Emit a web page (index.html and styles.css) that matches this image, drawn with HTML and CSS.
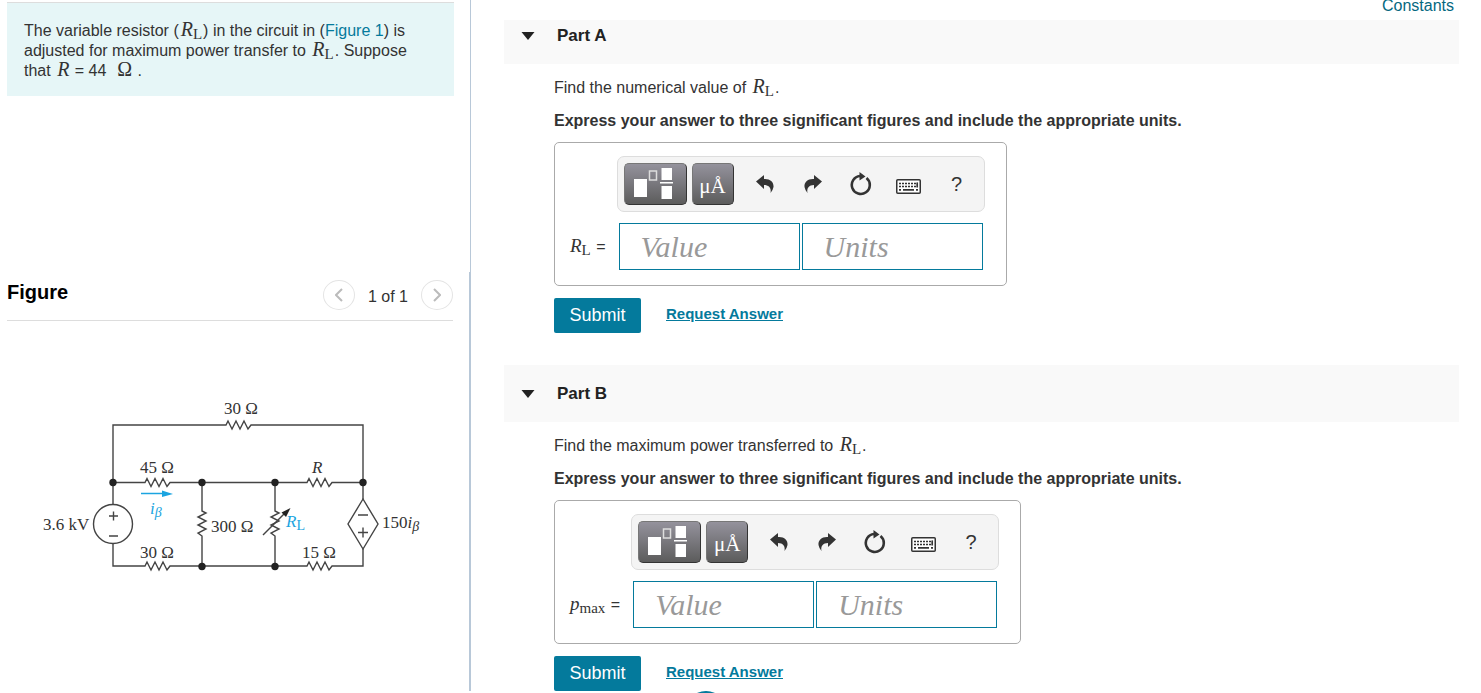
FILE: index.html
```html
<!DOCTYPE html>
<html lang="en">

<head>
  <meta charset="UTF-8">
  <meta name="viewport" content="width=device-width, initial-scale=1.0">
  <title>Maximum power transfer</title>
  <link rel="stylesheet" href="styles.css">
</head>

<body>
  <!-- shared icons -->
  <svg class="sprite" aria-hidden="true">
    <symbol id="template" viewBox="1 1 61 40">
      <rect x="10" y="16" width="13" height="18" fill="#fff" />
      <rect x="25.500" y="8" width="7" height="9" fill="none" stroke="#ddd" stroke-width="1.500" />
      <rect x="37.500" y="5" width="10.500" height="12" fill="#fff" />
      <rect x="36" y="19" width="13" height="1.500" fill="#fff" />
      <rect x="37.500" y="23" width="10.500" height="13" fill="#fff" />
    </symbol>
    <symbol id="undo" viewBox="0 0 18 20">
      <path d="M0 7.500 L8 1 V5 C14 4.500 18 8 17.500 13 Q17 16 14.500 19 C15.500 14 13 11 8 11 V15 Z" />
    </symbol>
    <symbol id="redo" viewBox="0 0 18 20">
      <path d="M18 7.500 L10 1 V5 C4 4.500 0 8 0.500 13 Q1 16 3.500 19 C2.500 14 5 11 10 11 V15 Z" />
    </symbol>
    <symbol id="reset" viewBox="0 0 22 24">
      <path d="M16.500 6 A9 9 0 1 1 10 4" fill="none" stroke="#333" stroke-width="2.600" />
      <path d="M9.500 0 L15.500 4.500 L9.500 8.500 Z" />
    </symbol>
    <symbol id="keyboard" viewBox="0 0 25 15">
      <rect x="0.750" y="0.750" width="23.500" height="13.500" rx="1" fill="#fff" stroke="#333" stroke-width="1.500" />
      <path d="M3 4.500 H22 M3 7.500 H20" stroke="#333" stroke-width="1.700" stroke-dasharray="2 1" />
      <path d="M3 10.800 H5 M7 10.800 H18 M20 10.800 H22 M21.200 3.500 V8.500" stroke="#333" stroke-width="1.700" />
    </symbol>
  </svg>

  <main class="page">
    <aside class="left">
      <div class="problem">
        The variable resistor (<span class="math"><i>R</i><sub>L</sub></span>) in the circuit in (<a href="#figure">Figure 1</a>) is
        adjusted for maximum power transfer to <span class="math"><i>R</i><sub>L</sub></span>. Suppose
        that <span class="math"><i>R</i></span> = 44 &nbsp;<span class="math">Ω</span> .
      </div>

      <section class="figure" id="figure">
        <header class="figure-head">
          <h2>Figure</h2>
          <div class="pager">
            <button type="button" aria-label="Previous figure"><svg viewBox="0 0 8 14"><path d="M7 1 L1 7 L7 13" /></svg></button>
            <span>1 of 1</span>
            <button type="button" aria-label="Next figure"><svg viewBox="0 0 8 14"><path d="M1 1 L7 7 L1 13" /></svg></button>
          </div>
        </header>

        <svg class="circuit" width="400" height="190" viewBox="30 390 400 190" role="img" aria-label="Circuit diagram">
          <!-- wires and resistors -->
          <g class="wire">
            <path d="M113 504 V425 H226 l2 -4 4 8 4 -8 4 8 4 -8 4 8 3 -4 H363 V499" />
            <path d="M113 482.500 H145 l2 -4 4 8 4 -8 4 8 4 -8 4 8 3 -4 H307 l2 -4 4 8 4 -8 4 8 4 -8 4 8 3 -4 H363" />
            <path d="M113 544 V566 H145 l2 -4 4 8 4 -8 4 8 4 -8 4 8 3 -4 H307 l2 -4 4 8 4 -8 4 8 4 -8 4 8 3 -4 H363 V549" />
            <path d="M202 482 V511 l4 2 -8 4 8 4 -8 4 8 4 -8 4 4 3 V566" />
            <path d="M275 482 V511 l4 2 -8 4 8 4 -8 4 8 4 -8 4 4 3 V566" />
            <circle cx="113" cy="524" r="19.500" />
            <path d="M363 499 L378 524 L363 549 L348 524 Z" />
            <path d="M109 516 H118 M113.500 511.500 V520.500 M109 536 H118" />
            <path d="M358 515 H368 M358 532.500 H368 M363 527.500 V537.500" />
            <path d="M263 535 L286 512" />
          </g>
          <path class="ink" d="M290.500 508 L286 517 L281.500 512.500 Z" />
          <g class="ink">
            <circle cx="113" cy="482.500" r="3.700" />
            <circle cx="202" cy="482.500" r="3.700" />
            <circle cx="275" cy="482.500" r="3.700" />
            <circle cx="363" cy="482.500" r="3.700" />
            <circle cx="202" cy="566.500" r="3.700" />
            <circle cx="275" cy="566.500" r="3.700" />
          </g>
          <path class="current" d="M141 493.500 H164" />
          <path class="blue" d="M162 490.500 L173 494 L162 497 Z" />
          <!-- labels -->
          <g class="labels">
            <text x="224" y="414">30 Ω</text>
            <text x="140" y="473">45 Ω</text>
            <text x="140" y="558">30 Ω</text>
            <text x="43" y="530">3.6 kV</text>
            <text x="211" y="532">300 Ω</text>
            <text x="302" y="558">15 Ω</text>
            <text x="312" y="473" font-style="italic">R</text>
            <text x="382" y="528">150<tspan font-style="italic">i</tspan><tspan class="small" font-style="italic" dy="3">β</tspan></text>
            <text class="blue" x="150" y="514" font-style="italic">i<tspan class="small" dy="3">β</tspan></text>
            <text class="blue" x="286" y="527"><tspan font-style="italic">R</tspan><tspan class="small" dy="3">L</tspan></text>
          </g>
        </svg>
      </section>
    </aside>

    <div class="right">
      <nav class="topbar"><a href="#constants">Constants</a></nav>

      <section class="part">
        <header class="part-head">
          <svg class="caret" viewBox="0 0 14 8"><path d="M0.500 0 H13.500 L7 8 Z" /></svg>
          <h3>Part A</h3>
        </header>
        <form class="part-body">
          <p>Find the numerical value of <span class="math"><i>R</i><sub>L</sub></span>.</p>
          <p class="bold">Express your answer to three significant figures and include the appropriate units.</p>
          <div class="answer">
            <div class="toolbar">
              <button type="button" class="dark wide" aria-label="Templates"><svg><use href="#template" /></svg></button>
              <button type="button" class="dark">μÅ</button>
              <button type="button" class="tool" aria-label="Undo"><svg width="18" height="20"><use href="#undo" /></svg></button>
              <button type="button" class="tool" aria-label="Redo"><svg width="18" height="20"><use href="#redo" /></svg></button>
              <button type="button" class="tool" aria-label="Reset"><svg width="22" height="24"><use href="#reset" /></svg></button>
              <button type="button" class="tool keys" aria-label="Keyboard shortcuts"><svg width="25" height="15"><use href="#keyboard" /></svg></button>
              <button type="button" class="tool">?</button>
            </div>
            <label for="valueA"><span class="math"><i>R</i><sub>L</sub></span> =</label>
            <div class="fields">
              <input type="text" id="valueA" placeholder="Value">
              <input type="text" aria-label="Units" placeholder="Units">
            </div>
          </div>
          <div class="actions">
            <button type="button" class="submit">Submit</button>
            <a href="#answerA">Request Answer</a>
          </div>
        </form>
      </section>

      <section class="part">
        <header class="part-head">
          <svg class="caret" viewBox="0 0 14 8"><path d="M0.500 0 H13.500 L7 8 Z" /></svg>
          <h3>Part B</h3>
        </header>
        <form class="part-body">
          <p>Find the maximum power transferred to <span class="math"><i>R</i><sub>L</sub></span>.</p>
          <p class="bold">Express your answer to three significant figures and include the appropriate units.</p>
          <div class="answer">
            <div class="toolbar">
              <button type="button" class="dark wide" aria-label="Templates"><svg><use href="#template" /></svg></button>
              <button type="button" class="dark">μÅ</button>
              <button type="button" class="tool" aria-label="Undo"><svg width="18" height="20"><use href="#undo" /></svg></button>
              <button type="button" class="tool" aria-label="Redo"><svg width="18" height="20"><use href="#redo" /></svg></button>
              <button type="button" class="tool" aria-label="Reset"><svg width="22" height="24"><use href="#reset" /></svg></button>
              <button type="button" class="tool keys" aria-label="Keyboard shortcuts"><svg width="25" height="15"><use href="#keyboard" /></svg></button>
              <button type="button" class="tool">?</button>
            </div>
            <label for="valueB"><span class="math"><i>p</i><sub>max</sub></span> =</label>
            <div class="fields">
              <input type="text" id="valueB" placeholder="Value">
              <input type="text" aria-label="Units" placeholder="Units">
            </div>
          </div>
          <div class="actions">
            <button type="button" class="submit">Submit</button>
            <a href="#answerB">Request Answer</a>
          </div>
        </form>
      </section>

      <div class="logo"></div>
    </div>
  </main>
</body>

</html>
```
FILE: styles.css
```css
* {
  box-sizing: border-box;
}

body {
  margin: 0;
  font-family: "Liberation Sans", Arial, sans-serif;
  font-size: 16px;
  line-height: 20px;
  color: #333;
  background: #fff;
}

a {
  color: #047a9c;
  text-decoration: none;
}

h2,
h3,
p {
  margin: 0;
}

button {
  font-family: inherit;
  padding: 0;
  cursor: pointer;
}

.sprite {
  display: none;
}

.page {
  display: flex;
  height: 100vh;
  overflow: hidden;
}

/* left column */
.left {
  display: flex;
  flex-direction: column;
  flex: 0 0 471px;
  padding-top: 2px;
  padding-bottom: 2px;
}

.problem {
  margin: 0 17px 0 7px;
  padding: 18px 35px 15px 17px;
  border-top: 1px solid #ddd;
  background: #e6f6f7;
}

.left::before {
  content: "";
  position: absolute;
  top: 0;
  left: 470px;
  height: 272px;
  border-left: 1px solid #b8c8d8;
}

.math {
  margin: 0 1px 0 2px;
  font-family: "Liberation Serif", "Times New Roman", serif;
  font-size: 20px;
  line-height: 1px;
}

.math sub {
  font-size: 15px;
  line-height: 1px;
  vertical-align: -3px;
}

.figure {
  flex: 1;
  margin-top: 176px;
  padding: 0 16px 0 7px;
  border-right: 2px solid #b8c8d8;
}

.figure-head {
  display: flex;
  justify-content: space-between;
  height: 49px;
  padding-top: 8px;
  border-bottom: 1px solid #ddd;
}

.figure-head h2 {
  margin-top: 2px;
  font-size: 20px;
  color: #000;
}

.pager {
  display: flex;
  align-items: center;
  gap: 13px;
  height: 30px;
}

.pager span {
  margin-top: 4px;
}

.pager button {
  width: 32px;
  height: 30px;
  border: 1px solid #e4e4e4;
  border-radius: 50%;
  background: #fff;
}

.pager svg {
  display: block;
  width: 8px;
  height: 14px;
  margin: 0 auto;
  fill: none;
  stroke: #bbb;
  stroke-width: 2;
}

.circuit {
  display: block;
  margin: 69px 0 0 23px;
}

.wire {
  fill: none;
  stroke: #444;
  stroke-width: 1.400;
}

.ink {
  fill: #222;
}

.current {
  stroke: #1ba4e0;
  stroke-width: 1.500;
}

.labels {
  font-family: "Liberation Serif", "Times New Roman", serif;
  font-size: 17px;
  fill: #333;
}

.labels .small {
  font-size: 14px;
}

.circuit .blue {
  fill: #1ba4e0;
}

/* right column */
.right {
  flex: 1;
  min-width: 0;
  padding: 0 22px 0 33px;
}

.topbar {
  position: relative;
  height: 20px;
  margin-bottom: -13px;
  padding: 0 5px;
  line-height: 12px;
  text-align: right;
  background: #fff;
}

.topbar a {
  color: #05687f;
}

.part {
  margin-bottom: 32px;
}

.part-head {
  display: flex;
  align-items: center;
  gap: 22px;
  height: 57px;
  padding-left: 17px;
  background: #f9f9f9;
}

.part-head h3 {
  font-size: 17px;
  color: #222;
}

.caret {
  width: 14px;
  height: 8px;
  fill: #222;
}

.part-body {
  padding: 14px 0 0 50px;
}

.part-body p {
  height: 20px;
  margin-bottom: 13px;
}

.part-body .bold {
  margin-bottom: 11px;
  font-weight: bold;
}

.answer {
  display: grid;
  grid-template-columns: auto auto;
  row-gap: 11px;
  width: fit-content;
  padding: 13px 21px 15px 13px;
  border: 1px solid #aaa;
  border-radius: 5px;
}

.toolbar {
  grid-column: 2;
  display: flex;
  align-items: center;
  height: 56px;
  margin-left: -2px;
  padding: 0 3px 0 6px;
  border: 1px solid #ddd;
  border-radius: 7px;
  background: #f4f4f4;
}

.dark {
  width: 42px;
  height: 42px;
  margin-right: 5px;
  padding-top: 4px;
  border: 1px solid #333;
  border-top-color: #777;
  border-left-color: #777;
  border-radius: 5px;
  font-family: "Liberation Serif", "Times New Roman", serif;
  font-size: 21px;
  color: #fff;
  background: linear-gradient(#94929c, #5c5c5c);
}

.wide {
  width: 63px;
  padding-top: 0;
}

.wide svg {
  display: block;
  width: 61px;
  height: 40px;
}

.tool {
  display: flex;
  align-items: center;
  justify-content: center;
  width: 48px;
  height: 42px;
  border: 0;
  font-size: 20px;
  color: #333;
  background: none;
}

.tool svg {
  fill: #333;
}

.keys {
  padding-top: 5px;
}

.dark + .tool {
  margin-left: 2px;
}

.answer label {
  align-self: center;
  padding-right: 13px;
}

.answer label .math {
  font-size: 19px;
}

.fields {
  display: flex;
  gap: 2px;
}

.fields input {
  width: 181px;
  height: 47px;
  padding: 0 21px;
  border: 1px solid #047a9c;
  border-radius: 0;
  font-family: "Liberation Serif", "Times New Roman", serif;
  font-size: 30px;
  font-style: italic;
}

.fields input::placeholder {
  color: #999;
}

.actions {
  display: flex;
  align-items: center;
  gap: 25px;
  margin-top: 12px;
}

.actions a {
  padding-bottom: 3px;
  font-size: 15px;
  font-weight: bold;
  text-decoration: underline;
}

.submit {
  width: 87px;
  height: 35px;
  border: 0;
  border-radius: 2px;
  font-size: 18px;
  color: #fff;
  background: #047a9c;
}

/* round logo that starts at the fold */
.logo {
  width: 44px;
  height: 44px;
  margin: -32px 0 0 180px;
  border-radius: 50%;
  background: #047a9c;
}
```
